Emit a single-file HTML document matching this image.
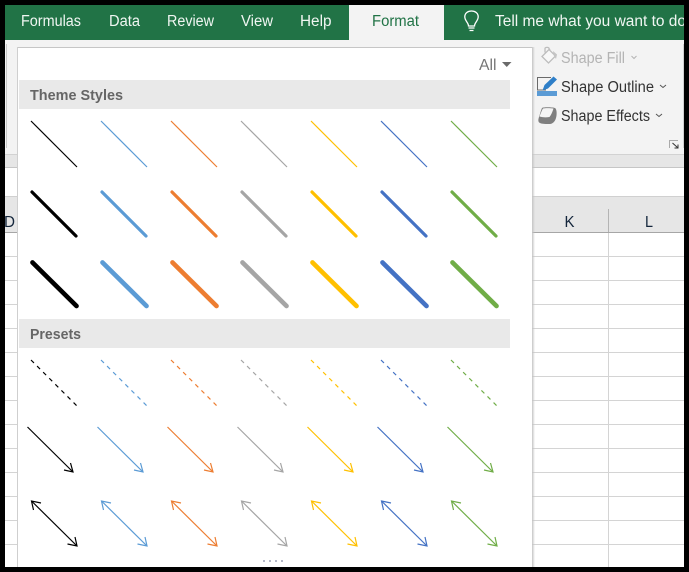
<!DOCTYPE html>
<html lang="en">
<head>
<meta charset="utf-8">
<title>Shape Styles</title>
<style>
html,body{margin:0;padding:0;width:689px;height:572px;background:#000;overflow:hidden}
svg{display:block}
text{font-family:"Liberation Sans",sans-serif}
</style>
</head>
<body>
<svg xmlns="http://www.w3.org/2000/svg" width="689" height="572" viewBox="0 0 689 572">
<defs>
  <clipPath id="app"><rect x="5" y="5" width="679" height="562"/></clipPath>
  <linearGradient id="shadow" x1="0" x2="1" y1="0" y2="0"><stop offset="0" stop-color="#c4c4c4"/><stop offset="1" stop-color="#c4c4c4" stop-opacity="0"/></linearGradient>
  <g id="r1"><line x1="31" y1="121" x2="77" y2="167" stroke-width="1.200"/></g>
  <g id="r2"><line x1="32" y1="192" x2="76" y2="236" stroke-width="3.200" stroke-linecap="round"/></g>
  <g id="r3"><line x1="32.500" y1="262.500" x2="76.500" y2="306" stroke-width="4.700" stroke-linecap="round"/></g>
  <g id="r4"><line x1="31" y1="360" x2="77" y2="406" stroke-width="1.200" stroke-dasharray="4.200 4.400"/></g>
  <g id="r5" fill="none" stroke-width="1.200"><line x1="27.500" y1="427" x2="73" y2="472"/><path d="M64 470L73 472L70.500 463"/></g>
  <g id="r6" fill="none" stroke-width="1.200"><line x1="31.500" y1="501" x2="77" y2="546"/><path d="M41 503L31.500 501L33.500 510M67.500 544L77 546L75 537"/></g>
  <g id="row1"><use href="#r1" stroke="#000"/><use href="#r1" x="70" stroke="#5B9BD5"/><use href="#r1" x="140" stroke="#ED7D31"/><use href="#r1" x="210" stroke="#A5A5A5"/><use href="#r1" x="280" stroke="#FFC000"/><use href="#r1" x="350" stroke="#4472C4"/><use href="#r1" x="420" stroke="#70AD47"/></g>
  <g id="row2"><use href="#r2" stroke="#000"/><use href="#r2" x="70" stroke="#5B9BD5"/><use href="#r2" x="140" stroke="#ED7D31"/><use href="#r2" x="210" stroke="#A5A5A5"/><use href="#r2" x="280" stroke="#FFC000"/><use href="#r2" x="350" stroke="#4472C4"/><use href="#r2" x="420" stroke="#70AD47"/></g>
  <g id="row3"><use href="#r3" stroke="#000"/><use href="#r3" x="70" stroke="#5B9BD5"/><use href="#r3" x="140" stroke="#ED7D31"/><use href="#r3" x="210" stroke="#A5A5A5"/><use href="#r3" x="280" stroke="#FFC000"/><use href="#r3" x="350" stroke="#4472C4"/><use href="#r3" x="420" stroke="#70AD47"/></g>
  <g id="row4"><use href="#r4" stroke="#000"/><use href="#r4" x="70" stroke="#5B9BD5"/><use href="#r4" x="140" stroke="#ED7D31"/><use href="#r4" x="210" stroke="#A5A5A5"/><use href="#r4" x="280" stroke="#FFC000"/><use href="#r4" x="350" stroke="#4472C4"/><use href="#r4" x="420" stroke="#70AD47"/></g>
  <g id="row5"><use href="#r5" stroke="#000"/><use href="#r5" x="70" stroke="#5B9BD5"/><use href="#r5" x="140" stroke="#ED7D31"/><use href="#r5" x="210" stroke="#A5A5A5"/><use href="#r5" x="280" stroke="#FFC000"/><use href="#r5" x="350" stroke="#4472C4"/><use href="#r5" x="420" stroke="#70AD47"/></g>
  <g id="row6"><use href="#r6" stroke="#000"/><use href="#r6" x="70" stroke="#5B9BD5"/><use href="#r6" x="140" stroke="#ED7D31"/><use href="#r6" x="210" stroke="#A5A5A5"/><use href="#r6" x="280" stroke="#FFC000"/><use href="#r6" x="350" stroke="#4472C4"/><use href="#r6" x="420" stroke="#70AD47"/></g>
</defs>
<rect width="689" height="572" fill="#000"/>
<g clip-path="url(#app)">
  <rect x="5" y="5" width="679" height="562" fill="#fff"/>
  <!-- title tabs -->
  <rect x="5" y="5" width="679" height="35" fill="#217346"/>
  <rect x="349" y="5" width="95" height="35" fill="#f3f3f3"/>
  <g font-size="15.500" fill="#f0f6f2">
    <text x="21" y="26" textLength="60" lengthAdjust="spacingAndGlyphs">Formulas</text>
    <text x="109" y="26" textLength="31" lengthAdjust="spacingAndGlyphs">Data</text>
    <text x="167" y="26" textLength="47" lengthAdjust="spacingAndGlyphs">Review</text>
    <text x="241" y="26" textLength="32" lengthAdjust="spacingAndGlyphs">View</text>
    <text x="300" y="26" textLength="31.500" lengthAdjust="spacingAndGlyphs">Help</text>
    <text x="495" y="26" textLength="191" lengthAdjust="spacingAndGlyphs">Tell me what you want to do</text>
  </g>
  <text x="372" y="26" font-size="15.500" fill="#217346" textLength="47" lengthAdjust="spacingAndGlyphs">Format</text>
  <!-- bulb -->
  <g fill="none" stroke="#fff" stroke-width="1.300">
    <path d="M468.500 26C468.500 22.500 464.800 21 464.800 16.800C464.800 13 467.900 11 471.500 11C475.100 11 478.200 13 478.200 16.800C478.200 21 474.500 22.500 474.500 26Z"/>
    <path d="M468.500 28H474.500M469.500 30.500H473.500"/>
  </g>
  <!-- ribbon -->
  <rect x="5" y="40" width="679" height="114" fill="#f3f3f3"/>
  <rect x="5" y="154" width="679" height="1" fill="#d2d2d2"/>
  <rect x="5" y="155" width="679" height="12" fill="#e6e6e6"/>
  <rect x="5" y="167" width="679" height="1" fill="#c6c6c6"/>
  <rect x="5" y="168" width="679" height="28" fill="#fff"/>
  <rect x="5" y="196" width="679" height="1" fill="#d0d0d0"/>
  <rect x="5" y="197" width="679" height="35" fill="#e6e6e6"/>
  <rect x="5" y="232" width="679" height="1" fill="#a6a6a6"/>
  <rect x="6" y="44" width="1" height="104" fill="#c8c8c8"/>
  <rect x="683" y="44" width="1" height="104" fill="#d0d0d0"/>
  <!-- grid -->
  <g fill="#d4d4d4">
    <rect x="5" y="256" width="679" height="1"/><rect x="5" y="280" width="679" height="1"/>
    <rect x="5" y="304" width="679" height="1"/><rect x="5" y="328" width="679" height="1"/>
    <rect x="5" y="352" width="679" height="1"/><rect x="5" y="376" width="679" height="1"/>
    <rect x="5" y="400" width="679" height="1"/><rect x="5" y="424" width="679" height="1"/>
    <rect x="5" y="448" width="679" height="1"/><rect x="5" y="472" width="679" height="1"/>
    <rect x="5" y="496" width="679" height="1"/><rect x="5" y="520" width="679" height="1"/>
    <rect x="5" y="544" width="679" height="1"/>
    <rect x="608" y="233" width="1" height="334"/>
  </g>
  <rect x="608" y="209" width="1" height="23" fill="#b4b4b4"/>
  <g font-size="16" fill="#14263c">
    <text x="4" y="227" textLength="11" lengthAdjust="spacingAndGlyphs">D</text>
    <text x="564.500" y="227" textLength="10" lengthAdjust="spacingAndGlyphs">K</text>
    <text x="645" y="227" textLength="8" lengthAdjust="spacingAndGlyphs">L</text>
  </g>
  <!-- right ribbon commands -->
  <text x="561" y="63" font-size="15.500" fill="#b4b4b4" textLength="64" lengthAdjust="spacingAndGlyphs">Shape Fill</text>
  <text x="561" y="92" font-size="15.500" fill="#333" textLength="93" lengthAdjust="spacingAndGlyphs">Shape Outline</text>
  <text x="561" y="121" font-size="15.500" fill="#333" textLength="89" lengthAdjust="spacingAndGlyphs">Shape Effects</text>
  <g fill="none" stroke-width="1">
    <path d="M631.500 56L634 58.500L636.500 56" stroke="#b4b4b4"/>
    <path d="M660 85L663 87.500L666 85" stroke="#555"/>
    <path d="M656 114L659 116.500L662 114" stroke="#555"/>
  </g>
  <!-- fill icon -->
  <path d="M542 56.500L549 49.500L555.500 56L548.500 63Z" fill="#f8f8f8" stroke="#bdbdbd" stroke-width="1.300"/>
  <path d="M545 52.500V48.500C545 47 549 47 549 48.500L550 50" fill="none" stroke="#bdbdbd" stroke-width="1.300"/>
  <path d="M553 51L557 54.500L556 59L553.500 55Z" fill="#c4c4c4"/>
  <!-- outline icon -->
  <path d="M551 77.500H537.500V90H546" fill="none" stroke="#6a6a6a" stroke-width="1"/>
  <path d="M542.500 90.500L544.500 85L553.500 76.500L557 79.500L548 88.500Z" fill="#2f7fc8"/>
  <rect x="537" y="91" width="20" height="5" fill="#5b9bd5"/>
  <!-- effects icon -->
  <path d="M542 108C543 107 552 107 555 108C557 109 557 115 556 118C555 122 552 124 550 124C546 124 542 124 540 123C538 122 538 120 539 117C540 114 541 110 542 108Z" fill="#7f7f7f"/>
  <path d="M543 108.500C545 108 550 108 553.500 108.500C552.500 112 551 115 549.500 117C546 117.500 543 117.500 539.500 116.500C540.500 114 542 110 543 108.500Z" fill="#f4f4f4"/>
  <!-- launcher -->
  <path d="M669.500 148V140.500H678" fill="none" stroke="#aaa"/>
  <path d="M672.500 143L677.500 147.500M678 144.500V148H674.500" fill="none" stroke="#333"/>
  <!-- panel -->
  <rect x="532" y="47" width="3" height="520" fill="url(#shadow)"/>
  <rect x="17" y="47" width="515" height="520" fill="#fff"/>
  <rect x="17" y="47" width="515" height="1" fill="#c6c6c6"/>
  <rect x="17" y="47" width="1" height="520" fill="#cfcfcf"/>
  <text x="479" y="70" font-size="16" fill="#767676" textLength="17.500" lengthAdjust="spacingAndGlyphs">All</text>
  <path d="M502 62H511.500L506.750 67Z" fill="#6a6a6a"/>
  <rect x="19" y="80" width="491" height="29" fill="#e9e9e9"/>
  <rect x="19" y="319" width="491" height="29" fill="#e9e9e9"/>
  <text x="30" y="100" font-size="15" font-weight="700" fill="#666" textLength="93" lengthAdjust="spacingAndGlyphs">Theme Styles</text>
  <text x="30" y="339" font-size="15" font-weight="700" fill="#666" textLength="51" lengthAdjust="spacingAndGlyphs">Presets</text>
  <use href="#row1"/><use href="#row2"/><use href="#row3"/>
  <use href="#row4"/><use href="#row5"/><use href="#row6"/>
  <g fill="#b4b8c8">
    <rect x="263" y="560" width="2" height="2"/><rect x="269" y="560" width="2" height="2"/>
    <rect x="275" y="560" width="2" height="2"/><rect x="281" y="560" width="2" height="2"/>
  </g>
</g>
</svg>
</body>
</html>
